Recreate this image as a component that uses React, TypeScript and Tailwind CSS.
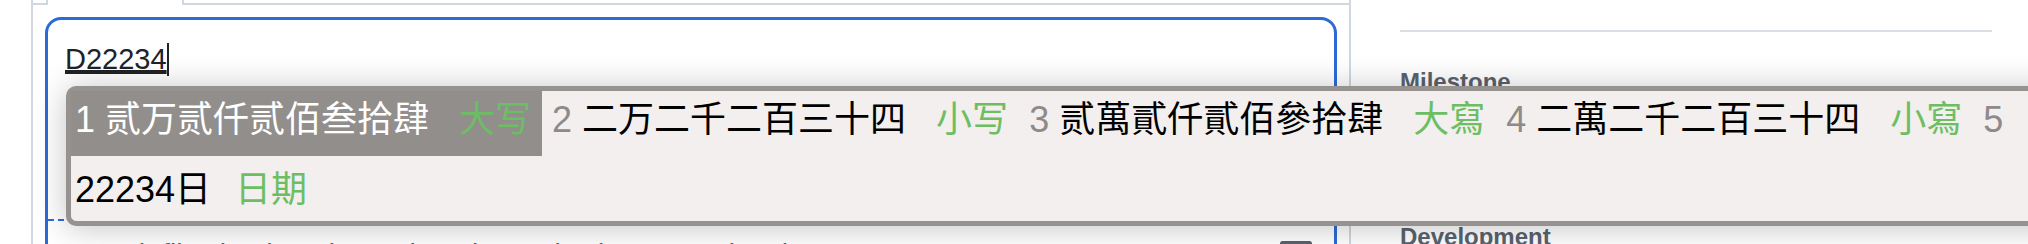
import React from "react";

const cands = [
  { n: "1", t: "贰万贰仟贰佰叁拾肆", l: "大写" },
  { n: "2", t: "二万二千二百三十四", l: "小写" },
  { n: "3", t: "贰萬貳仟貳佰參拾肆", l: "大寫" },
  { n: "4", t: "二萬二千二百三十四", l: "小寫" },
  { n: "5", t: "", l: "" },
];

export default function App() {
  return (
    <div className="relative w-[2028px] h-[244px] overflow-hidden bg-white font-['Liberation_Sans','Noto_Sans_CJK_SC',sans-serif]">
      <div className="flex h-full">
        {/* left gutter */}
        <div className="w-[31px] shrink-0" />
        {/* main column */}
        <div className="w-[1320px] shrink-0 border-x-2 border-[#d0d7de] flex flex-col">
          {/* tab strip */}
          <div className="flex h-[5px] shrink-0">
            <div className="w-[15px] border-b-2 border-r-2 border-[#d0d7de]" />
            <div className="w-[134px]" />
            <div className="flex-1 border-b-2 border-l-2 border-[#d0d7de]" />
          </div>
          {/* focused editor box */}
          <div className="mt-[12px] mx-[12px] border-[3px] border-[#2e6ad6] rounded-[16px] bg-white flex flex-col h-[400px]">
            <div className="h-[199px] pt-[25px] pl-[17px]">
              <div className="flex items-start text-[29px] leading-[29px] text-[#1f2328]">
                <span className="underline decoration-[4px] underline-offset-[1px] decoration-[#222]">D22234</span>
                <span className="w-[2px] h-[33px] bg-[#1f2328] mt-[-2px]" />
              </div>
            </div>
            <div className="h-[2px] bg-[repeating-linear-gradient(to_right,#2e6ad6_0_6px,transparent_6px_10px)]" />
            <div className="flex justify-between items-start pl-[27px] pr-[22px] pt-[19px]">
              <span className="text-[28px] leading-[28px] text-[#59636e]">
                Attach files by dragging &amp; dropping, selecting or pasting them.
              </span>
              <svg width="32" height="32" viewBox="0 0 16 16" className="mt-[-5px]" fill="#59636e">
                <path d="M14.85 3c.63 0 1.15.52 1.14 1.15v7.7c0 .63-.51 1.15-1.15 1.15H1.15C.52 13 0 12.48 0 11.84V4.15C0 3.52.52 3 1.15 3ZM9 11V5H7L5.5 7 4 5H2v6h2V8l1.5 1.92L7 8v3Zm2.99.5L14.5 8H13V5h-2v3H9.5Z" />
              </svg>
            </div>
          </div>
        </div>
        {/* right sidebar */}
        <div className="flex-1 pl-[49px] pr-[36px] flex flex-col">
          <div className="h-[30px] shrink-0" />
          <div className="h-[2px] bg-[#d8dee4] shrink-0" />
          <div className="mt-[38px] text-[24px] leading-[24px] font-semibold text-[#59636e]">Milestone</div>
          <div className="mt-[60px] text-[24px] leading-[24px] text-[#59636e]">No milestone</div>
          <div className="mt-[47px] text-[24px] leading-[24px] font-semibold text-[#59636e]">Development</div>
        </div>
      </div>

      {/* IME candidate window */}
      <div className="absolute left-[66px] top-[86px] w-[2100px] h-[140px] border-[5px] border-r-0 border-[#96928f] rounded-l-[10px] bg-[#f2efee] shadow-[0_2px_32px_rgba(0,0,0,0.24)] flex flex-col text-[36px] leading-[36px] whitespace-nowrap">
        <div className="flex h-[65px] gap-[6px]">
          {cands.map((c, i) => (
            <div
              key={c.n}
              className={
                i === 0
                  ? "flex h-full pl-[4px] pr-[11px] pt-[11px] bg-[#928e8c]"
                  : "flex h-full pl-[4px] pr-[11px] pt-[11px]"
              }
            >
              <span className={i === 0 ? "text-white" : "text-[#8e8a89]"}>{c.n}</span>
              {c.t && (
                <span className={i === 0 ? "ml-[10px] text-white" : "ml-[10px] text-black"}>{c.t}</span>
              )}
              {c.l && <span className="ml-[30px] text-[#6dbe63]">{c.l}</span>}
            </div>
          ))}
        </div>
        <div className="flex h-[65px] pl-[4px] pt-[16px]">
          <span className="text-black">22234日</span>
          <span className="ml-[24px] text-[#6dbe63]">日期</span>
        </div>
      </div>
    </div>
  );
}
